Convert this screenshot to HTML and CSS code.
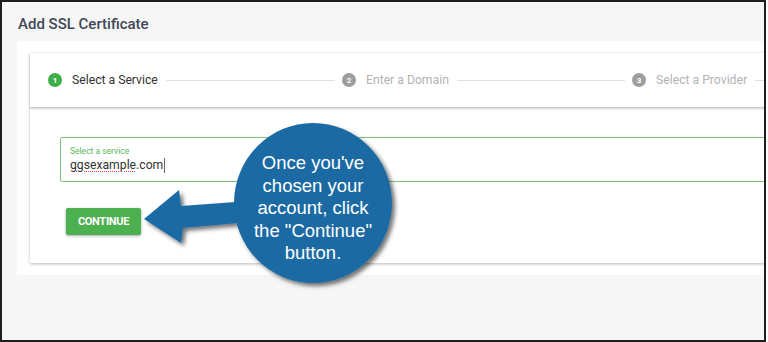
FILE: index.html
```html
<!DOCTYPE html>
<html>
<head>
<meta charset="utf-8">
<link rel="stylesheet" href="styles.css">
</head>
<body>
<div class="frame">
  <h1 class="title">Add SSL Certificate</h1>
  <div class="panel">
    <div class="card">
      <div class="stepper">
        <div class="step step-1">
          <span class="dot dot-active">1</span>
          <span class="step-label step-label-active">Select a Service</span>
          <span class="step-line"></span>
        </div>
        <div class="step step-2">
          <span class="dot">2</span>
          <span class="step-label">Enter a Domain</span>
          <span class="step-line"></span>
        </div>
        <div class="step step-3">
          <span class="dot">3</span>
          <span class="step-label">Select a Provider</span>
          <span class="step-line"></span>
        </div>
      </div>
      <div class="card-body">
        <div class="field">
          <div class="field-label">Select a service</div>
          <div class="field-value"><span class="misspelled">ggsexample</span>.com<span class="caret"></span></div>
        </div>
        <button class="btn">CONTINUE</button>
      </div>
    </div>
  </div>
  <div class="callout">
    <svg class="callout-shape" width="768" height="342" viewBox="0 0 768 342">
      <defs>
        <filter id="sh" x="-20%" y="-20%" width="140%" height="140%">
          <feDropShadow dx="3" dy="3" stdDeviation="2" flood-color="#000" flood-opacity="0.55"/>
        </filter>
      </defs>
      <g filter="url(#sh)" fill="#1a6ba3">
        <polygon points="144,219 179,190 181,206 250,201 250,222 183,228 181,243"/>
        <ellipse cx="313" cy="203" rx="79" ry="80"/>
      </g>
    </svg>
    <div class="callout-text">Once you've<br>chosen your<br>account, click<br>the "Continue"<br>button.</div>
  </div>
</div>
</body>
</html>
```

FILE: styles.css
```css
* { box-sizing: border-box; }
html, body { margin: 0; padding: 0; }
body {
  width: 768px;
  height: 342px;
  background: #ffffff;
  overflow: hidden;
  font-family: Roboto, "Liberation Sans", sans-serif;
}
.frame {
  position: relative;
  width: 766px;
  height: 342px;
  border: 2px solid #1e1e1e;
  background: #f6f6f6;
  padding: 13px 0 0 15px;
  overflow: hidden;
}
.title {
  margin: 0;
  padding-left: 1px;
  font-size: 15px;
  line-height: 18px;
  font-weight: 500;
  color: #404756;
}
.panel {
  margin-top: 8px;
  width: 800px;
  height: 234px;
  background: #ffffff;
  padding: 12px 0 0 13px;
}
.card {
  width: 800px;
  height: 210px;
  background: #ffffff;
  box-shadow: 0 1px 3px rgba(0,0,0,0.28);
}
.stepper {
  height: 55px;
  display: flex;
  align-items: center;
  padding-left: 18px;
  border-bottom: 1px solid #c8c8c8;
  box-shadow: 0 1px 2px rgba(0,0,0,0.18);
}
.step {
  display: flex;
  align-items: center;
  flex: none;
}
.step-1 { width: 294px; }
.step-2 { width: 290px; }
.step-3 { width: 300px; }
.dot {
  width: 14px;
  height: 14px;
  border-radius: 50%;
  background: #9e9e9e;
  color: #ffffff;
  font-size: 8px;
  font-weight: 700;
  display: flex;
  align-items: center;
  justify-content: center;
  flex: none;
}
.dot-active { background: #3fae49; }
.step-label {
  margin-left: 10px;
  font-size: 12.2px;
  color: #b3b3b3;
  white-space: nowrap;
}
.step-label-active { color: #333333; }
.step-line {
  flex: 1;
  height: 1px;
  background: #e0e0e0;
  margin: 0 7px 0 8px;
}
.card-body {
  padding: 29px 0 0 30px;
}
.field {
  width: 760px;
  height: 45px;
  border: 1.5px solid #7cc47c;
  border-radius: 2px;
  padding: 8px 0 0 9px;
}
.field-label {
  font-size: 8.5px;
  line-height: 11px;
  color: #5cb85c;
}
.field-value {
  font-size: 12.2px;
  line-height: 16px;
  color: #333333;
  display: flex;
  align-items: center;
}
.misspelled {
  text-decoration: underline dotted #e53935;
  text-decoration-thickness: 1px;
  text-underline-offset: 2px;
}
.caret {
  display: inline-block;
  width: 1px;
  height: 15px;
  background: #666666;
  margin-left: 1px;
}
.btn {
  display: block;
  margin: 26px 0 0 6px;
  width: 75px;
  height: 27px;
  border: none;
  border-radius: 2px;
  background: #4caf50;
  box-shadow: 0 1px 3px rgba(0,0,0,0.35);
  color: #ffffff;
  font-family: Roboto, "Liberation Sans", sans-serif;
  font-size: 11px;
  font-weight: 700;
  letter-spacing: -0.3px;
  padding: 0;
}
.callout {
  position: absolute;
  left: -2px;
  top: -2px;
  width: 768px;
  height: 342px;
  pointer-events: none;
}
.callout-shape {
  position: absolute;
  left: 0;
  top: 0;
}
.callout-text {
  position: absolute;
  left: 234px;
  top: 152px;
  width: 158px;
  text-align: center;
  font-family: "Liberation Sans", Arial, sans-serif;
  font-size: 18.5px;
  line-height: 22.5px;
  color: #ffffff;
}
```
